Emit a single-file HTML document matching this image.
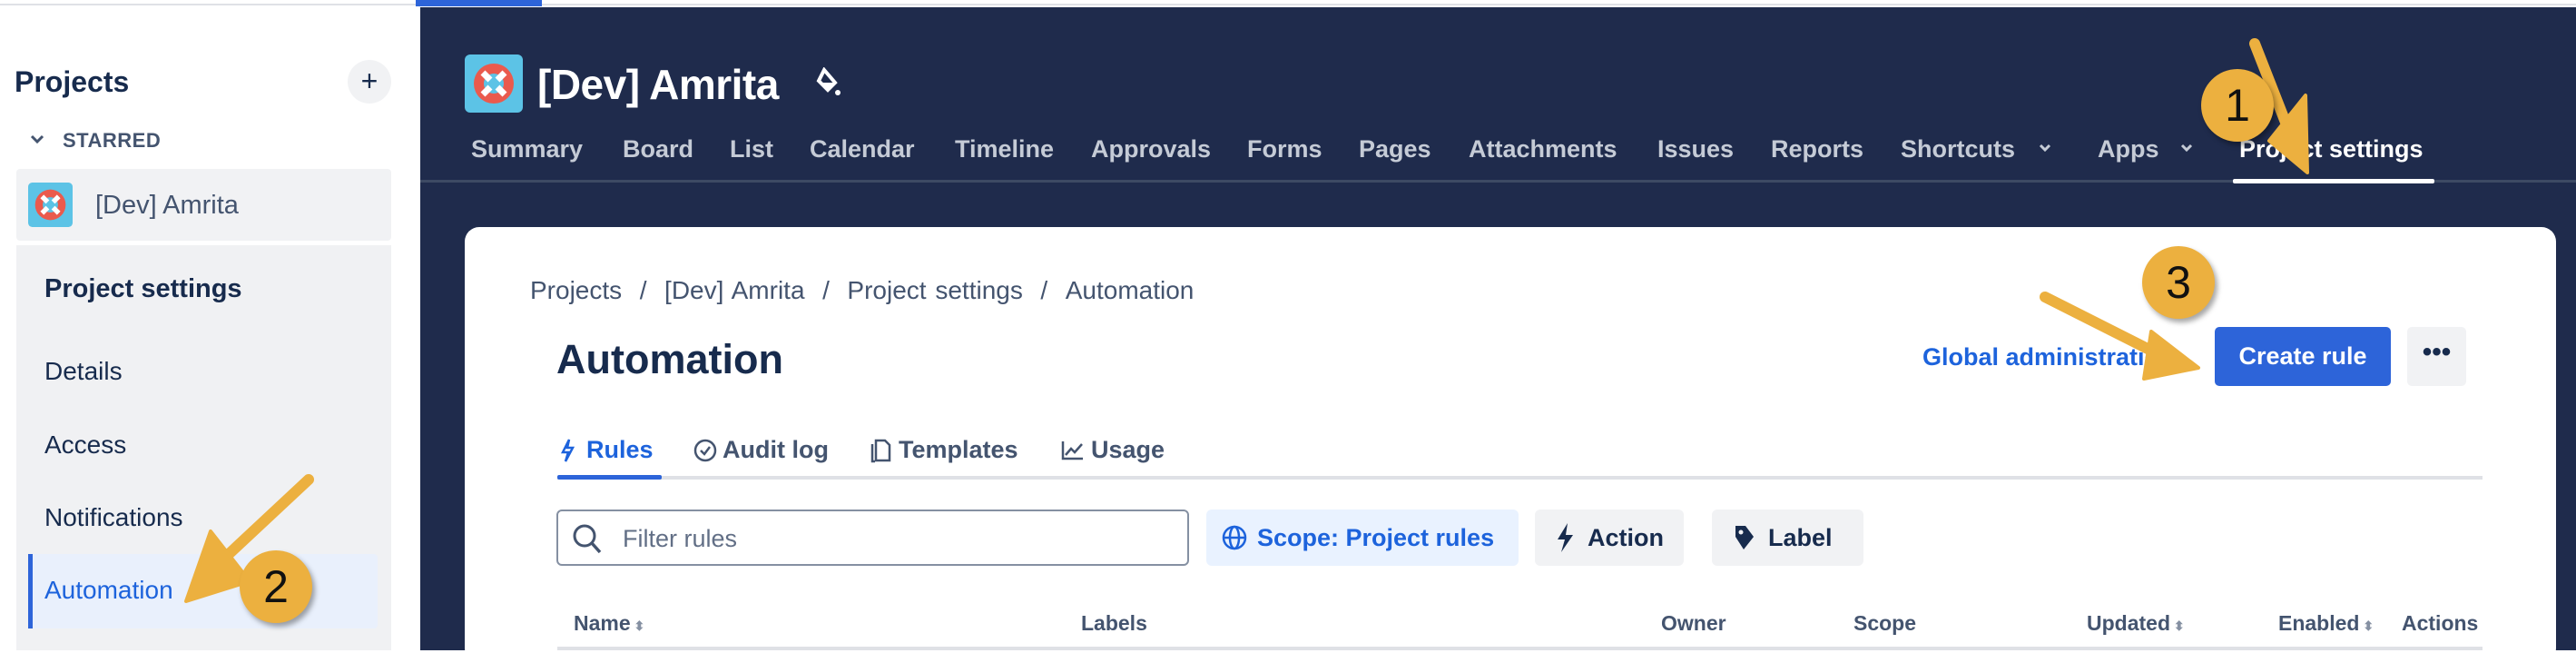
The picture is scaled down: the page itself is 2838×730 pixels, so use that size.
<!DOCTYPE html>
<html><head><meta charset="utf-8"><style>
*{margin:0;padding:0;box-sizing:border-box}
body{width:2838px;height:716px;overflow:hidden;background:#fff;font-family:"Liberation Sans",Arial,sans-serif;position:relative}
.a{position:absolute;white-space:nowrap}
.nav{position:absolute;top:149px;font-size:27px;font-weight:bold;color:#c5cbd6}
.sb{position:absolute;left:49px;font-size:28px;color:#172b4d}
.th{position:absolute;top:673px;font-size:23px;font-weight:bold;color:#44546f}
.btn{position:absolute;top:561px;height:62px;border-radius:6px;font-size:27px;font-weight:bold;display:flex;align-items:center}
.circ{position:absolute;width:80px;height:80px;border-radius:50%;background:#ecb03f;box-shadow:3px 4px 6px rgba(0,0,0,.35);font-size:50px;color:#111;text-align:center;line-height:80px}
</style></head><body>
<div class="a" style="left:0;top:0;width:2838px;height:6px;border-bottom:2px solid #dfe1e6"></div>
<div class="a" style="left:458px;top:0;width:139px;height:7px;background:#2d64d9"></div>
<!-- sidebar -->
<div class="a" style="left:16px;top:72px;font-size:32px;font-weight:bold;color:#172b4d">Projects</div>
<div class="a" style="left:383px;top:66px;width:48px;height:48px;border-radius:50%;background:#f1f2f4;font-size:32px;color:#172b4d;text-align:center;line-height:46px">+</div>
<svg class="a" style="left:32px;top:146px" width="18" height="14" viewBox="0 0 18 14"><path d="M3 4l6 6 6-6" stroke="#44546f" stroke-width="3" fill="none"/></svg>
<div class="a" style="left:69px;top:142px;font-size:22px;font-weight:bold;color:#44546f;letter-spacing:.5px">STARRED</div>
<div class="a" style="left:18px;top:186px;width:413px;height:79px;background:#f1f2f4;border-radius:4px"></div>
<svg class="a" style="left:31px;top:201px" width="49" height="49" viewBox="0 0 64 64"><rect width="64" height="64" rx="6" fill="#5cc3e6"/><circle cx="32" cy="32" r="22" fill="#ea5a4d"/><circle cx="32" cy="32" r="11" fill="#5cc3e6"/><path d="M20 20l8 8M44 20l-8 8M20 44l8-8M44 44l-8-8" stroke="#fff" stroke-width="7"/></svg>
<div class="a" style="left:105px;top:210px;font-size:29px;color:#44546f">[Dev] Amrita</div>
<div class="a" style="left:18px;top:270px;width:413px;height:446px;background:#f0f1f3"></div>
<div class="sb" style="top:302px;font-weight:bold;font-size:29px">Project settings</div>
<div class="sb" style="top:393px">Details</div>
<div class="sb" style="top:474px">Access</div>
<div class="sb" style="top:554px">Notifications</div>
<div class="a" style="left:32px;top:610px;width:384px;height:82px;background:#e9f0fc;border-radius:4px"></div>
<div class="a" style="left:31px;top:610px;width:5px;height:82px;background:#2d64d9"></div>
<div class="sb" style="top:634px;color:#1d63dc">Automation</div>
<!-- dark -->
<div class="a" style="left:463px;top:8px;width:2375px;height:708px;background:#1f2b4c"></div>
<svg class="a" style="left:512px;top:60px" width="64" height="64" viewBox="0 0 64 64"><rect width="64" height="64" rx="6" fill="#5cc3e6"/><circle cx="32" cy="32" r="22" fill="#ea5a4d"/><circle cx="32" cy="32" r="11" fill="#5cc3e6"/><path d="M20 20l8 8M44 20l-8 8M20 44l8-8M44 44l-8-8" stroke="#fff" stroke-width="7"/></svg>
<div class="a" style="left:592px;top:66px;font-size:46px;font-weight:bold;color:#fff;letter-spacing:-0.5px">[Dev] Amrita</div>
<svg class="a" style="left:898px;top:74px" width="30" height="34" viewBox="0 0 30 34"><path d="M10 3l12 14-8 8-10-10z" fill="none" stroke="#fff" stroke-width="4"/><path d="M6 17h16l-8 8z" fill="#fff"/><circle cx="25" cy="28" r="3" fill="#fff"/></svg>
<div class="nav" style="left:519px">Summary</div>
<div class="nav" style="left:686px">Board</div>
<div class="nav" style="left:804px">List</div>
<div class="nav" style="left:892px">Calendar</div>
<div class="nav" style="left:1052px">Timeline</div>
<div class="nav" style="left:1202px">Approvals</div>
<div class="nav" style="left:1374px">Forms</div>
<div class="nav" style="left:1497px">Pages</div>
<div class="nav" style="left:1618px">Attachments</div>
<div class="nav" style="left:1826px">Issues</div>
<div class="nav" style="left:1951px">Reports</div>
<div class="nav" style="left:2094px">Shortcuts</div>
<svg class="a" style="left:2245px;top:156px" width="16" height="14"><path d="M3 4l5 5 5-5" stroke="#c5cbd6" stroke-width="3" fill="none"/></svg>
<div class="nav" style="left:2311px">Apps</div>
<svg class="a" style="left:2401px;top:156px" width="16" height="14"><path d="M3 4l5 5 5-5" stroke="#c5cbd6" stroke-width="3" fill="none"/></svg>
<div class="nav" style="left:2467px;color:#fff">Project settings</div>
<div class="a" style="left:463px;top:198px;width:2375px;height:3px;background:#3d4a64"></div>
<div class="a" style="left:2460px;top:197px;width:222px;height:5px;background:#fff;border-radius:2px"></div>
<!-- card -->
<div class="a" style="left:512px;top:250px;width:2304px;height:480px;background:#fff;border-radius:16px"></div>
<div class="a" style="left:584px;top:304px;font-size:28px;color:#44546f;word-spacing:2px">Projects &nbsp;/ &nbsp;[Dev] Amrita &nbsp;/ &nbsp;Project settings &nbsp;/ &nbsp;Automation</div>
<div class="a" style="left:613px;top:370px;font-size:45px;font-weight:bold;color:#172b4d">Automation</div>
<div class="a" style="left:2118px;top:378px;font-size:27px;font-weight:bold;color:#1d63dc">Global administration</div>
<div class="a" style="left:2440px;top:360px;width:194px;height:65px;background:#2d64d9;border-radius:5px;color:#fff;font-size:27px;font-weight:bold;text-align:center;line-height:65px">Create rule</div>
<div class="a" style="left:2652px;top:360px;width:65px;height:65px;background:#f1f2f4;border-radius:5px;color:#172b4d;font-size:30px;font-weight:bold;text-align:center;line-height:56px">•••</div>
<!-- tabs -->
<svg class="a" style="left:617px;top:482px" width="16" height="28" viewBox="0 0 16 28"><path d="M10 2L3 16h6l-3 10 8-15H8z" fill="none" stroke="#1d63dc" stroke-width="2.5"/></svg>
<div class="a" style="left:646px;top:480px;font-size:27px;font-weight:bold;color:#1d63dc">Rules</div>
<svg class="a" style="left:763px;top:482px" width="28" height="28"><circle cx="14" cy="14" r="11" fill="none" stroke="#44546f" stroke-width="2.5"/><path d="M9 14l4 4 6-8" fill="none" stroke="#44546f" stroke-width="2.5"/></svg>
<div class="a" style="left:796px;top:480px;font-size:27px;font-weight:bold;color:#44546f">Audit log</div>
<svg class="a" style="left:957px;top:482px" width="26" height="28"><path d="M8 3h10l5 5v17H8z M4 7v19h3" fill="none" stroke="#44546f" stroke-width="2.5"/></svg>
<div class="a" style="left:990px;top:480px;font-size:27px;font-weight:bold;color:#44546f">Templates</div>
<svg class="a" style="left:1168px;top:484px" width="28" height="24"><path d="M3 2v19h22M6 17l6-7 4 4 8-9" fill="none" stroke="#44546f" stroke-width="2.5"/></svg>
<div class="a" style="left:1202px;top:480px;font-size:27px;font-weight:bold;color:#44546f">Usage</div>
<div class="a" style="left:614px;top:524px;width:2121px;height:4px;background:#dfe1e6"></div>
<div class="a" style="left:614px;top:523px;width:115px;height:5px;background:#2d64d9;border-radius:2px"></div>
<!-- filters -->
<div class="a" style="left:613px;top:561px;width:697px;height:62px;border:2px solid #8590a2;border-radius:6px"></div>
<svg class="a" style="left:630px;top:576px" width="34" height="36"><circle cx="14" cy="14" r="11" fill="none" stroke="#44546f" stroke-width="3"/><path d="M22 22l9 10" stroke="#44546f" stroke-width="3.5"/></svg>
<div class="a" style="left:686px;top:578px;font-size:27px;color:#626f86">Filter rules</div>
<div class="btn" style="left:1329px;width:344px;background:#e9f2ff;color:#1d63dc"><svg style="margin:0 10px 0 16px" width="30" height="30"><circle cx="15" cy="15" r="12" fill="none" stroke="#1d63dc" stroke-width="2.5"/><ellipse cx="15" cy="15" rx="5" ry="12" fill="none" stroke="#1d63dc" stroke-width="2.5"/><path d="M3 15h24" stroke="#1d63dc" stroke-width="2.5"/></svg>Scope: Project rules</div>
<div class="btn" style="left:1691px;width:164px;background:#f1f2f4;color:#172b4d"><svg style="margin:0 14px 0 22px" width="22" height="34" viewBox="0 0 22 34"><path d="M14 1L3 19h8l-4 14 13-19h-8z" fill="#172b4d"/></svg>Action</div>
<div class="btn" style="left:1886px;width:167px;background:#f1f2f4;color:#172b4d"><svg style="margin:0 14px 0 24px" width="24" height="30" viewBox="0 0 24 30"><path d="M2 2h11l9 12-11 14L2 14z" fill="#172b4d"/><circle cx="8" cy="9" r="2.5" fill="#f1f2f4"/></svg>Label</div>
<!-- table header -->
<div class="th" style="left:632px">Name<span style="font-size:14px;color:#8590a2"> ⬍</span></div>
<div class="th" style="left:1191px">Labels</div>
<div class="th" style="left:1830px">Owner</div>
<div class="th" style="left:2042px">Scope</div>
<div class="th" style="left:2299px">Updated<span style="font-size:14px;color:#8590a2"> ⬍</span></div>
<div class="th" style="left:2510px">Enabled<span style="font-size:14px;color:#8590a2"> ⬍</span></div>
<div class="th" style="left:2646px">Actions</div>
<div class="a" style="left:614px;top:712px;width:2121px;height:4px;background:#dfe1e6"></div>
<!-- annotations -->
<svg class="a" style="left:0;top:0" width="2838" height="716">
<g fill="#ecb03f" stroke="#ecb03f" stroke-linecap="round">
<path d="M2484 48L2524 150" stroke-width="12"/><path d="M2500 155L2540 105L2542 190z" stroke-width="4" stroke-linejoin="round"/>
<path d="M2253 327L2378 390" stroke-width="12"/><path d="M2370 365L2422 405L2362 417z" stroke-width="4" stroke-linejoin="round"/>
<path d="M340 528L250 612" stroke-width="12"/><path d="M232 585L205 662L275 640z" stroke-width="4" stroke-linejoin="round"/>
</g></svg>
<div class="circ" style="left:2425px;top:76px">1</div>
<div class="circ" style="left:2360px;top:271px">3</div>
<div class="circ" style="left:264px;top:606px">2</div>
</body></html>
